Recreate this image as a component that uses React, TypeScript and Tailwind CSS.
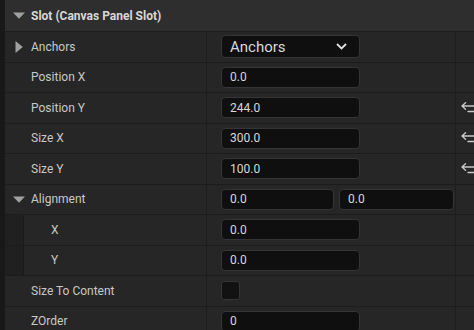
import React from "react";

const font = { fontFamily: "Roboto, 'Noto Sans', 'Liberation Sans', sans-serif" };

function TriDown() {
  return (
    <svg width="12" height="7" viewBox="0 0 12 7" className="shrink-0">
      <path d="M0 0.5 L12 0.5 L6 6.8 Z" fill="#a0a0a0" />
    </svg>
  );
}

function TriRight() {
  return (
    <svg width="8" height="12" viewBox="0 0 8 12" className="shrink-0">
      <path d="M0.5 0 L7.8 6 L0.5 12 Z" fill="#a0a0a0" />
    </svg>
  );
}

function ResetIcon() {
  return (
    <svg width="16" height="12" viewBox="0 0 16 12" className="shrink-0">
      <path d="M2 4 H15 M5.5 0.8 L2 4 L5.5 7.2" stroke="#c8c8c8" strokeWidth="1.4" fill="none" strokeLinecap="round" strokeLinejoin="round" />
      <path d="M8 9.5 H15" stroke="#c8c8c8" strokeWidth="1.4" fill="none" strokeLinecap="round" />
    </svg>
  );
}

function Input({ value, w = "w-[139px]" }: { value: string; w?: string }) {
  return (
    <div className={`${w} h-[21px] rounded-[4px] bg-[#0f0f0f] border border-[#353535] flex items-center pl-[8px] text-[12px] text-[#d8d8d8]`}>
      {value}
    </div>
  );
}

function Row({
  label,
  children,
  icon,
  indent,
  reset,
}: {
  label: string;
  children?: React.ReactNode;
  icon?: React.ReactNode;
  indent?: boolean;
  reset?: boolean;
}) {
  return (
    <div className="flex shrink-0 h-[30.5px] border-b border-[#1c1c1c] bg-[#262626]">
      <div className="w-[202px] flex items-stretch border-r border-[#1e1e1e]">
        {indent ? (
          <>
            <div className="w-[19px] bg-[#202020] border-r border-[#1a1a1a]" />
            <div className="flex items-center pl-[27px] text-[12px] text-[#c8c8c8]">{label}</div>
          </>
        ) : (
          <div className="flex items-center">
            <div className="w-[26px] flex justify-center pl-[1px]">{icon}</div>
            <div className="text-[12px] text-[#c8c8c8]">{label}</div>
          </div>
        )}
      </div>
      <div className="w-[249px] flex items-center pl-[14px] border-r border-[#1e1e1e]">{children}</div>
      <div className="flex-1 flex items-center pl-[4px] overflow-hidden">{reset ? <ResetIcon /> : null}</div>
    </div>
  );
}

export default function App() {
  return (
    <div className="w-[474px] h-[330px] overflow-hidden flex bg-[#181818]" style={font}>
      <div className="w-[5px] shrink-0 bg-[#181818]" />
      <div className="flex-1 flex flex-col overflow-hidden">
        <div className="h-[32px] shrink-0 bg-[#2e2e2e] border-b border-[#1c1c1c] flex items-center">
          <div className="w-[26px] flex justify-center pl-[1px]">
            <TriDown />
          </div>
          <div className="text-[12px] font-bold text-[#d8d8d8]">Slot (Canvas Panel Slot)</div>
        </div>
        <Row label="Anchors" icon={<TriRight />}>
          <div className="w-[139px] h-[23px] rounded-[4px] bg-[#0f0f0f] border border-[#353535] flex items-center pl-[8px] pr-[12px] justify-between">
            <span className="text-[15px] text-[#d8d8d8]">Anchors</span>
            <svg width="11" height="7" viewBox="0 0 11 7">
              <path d="M1 1 L5.5 5.5 L10 1" stroke="#e0e0e0" strokeWidth="1.8" fill="none" />
            </svg>
          </div>
        </Row>
        <Row label="Position X">
          <Input value="0.0" />
        </Row>
        <Row label="Position Y" reset>
          <Input value="244.0" />
        </Row>
        <Row label="Size X" reset>
          <Input value="300.0" />
        </Row>
        <Row label="Size Y" reset>
          <Input value="100.0" />
        </Row>
        <Row label="Alignment" icon={<TriDown />}>
          <div className="flex gap-[5px]">
            <Input value="0.0" w="w-[113px]" />
            <Input value="0.0" w="w-[115px]" />
          </div>
        </Row>
        <Row label="X" indent>
          <Input value="0.0" />
        </Row>
        <Row label="Y" indent>
          <Input value="0.0" />
        </Row>
        <Row label="Size To Content">
          <div className="w-[19px] h-[19px] rounded-[3px] bg-[#121212] border border-[#353535]" />
        </Row>
        <Row label="ZOrder">
          <Input value="0" />
        </Row>
      </div>
    </div>
  );
}
